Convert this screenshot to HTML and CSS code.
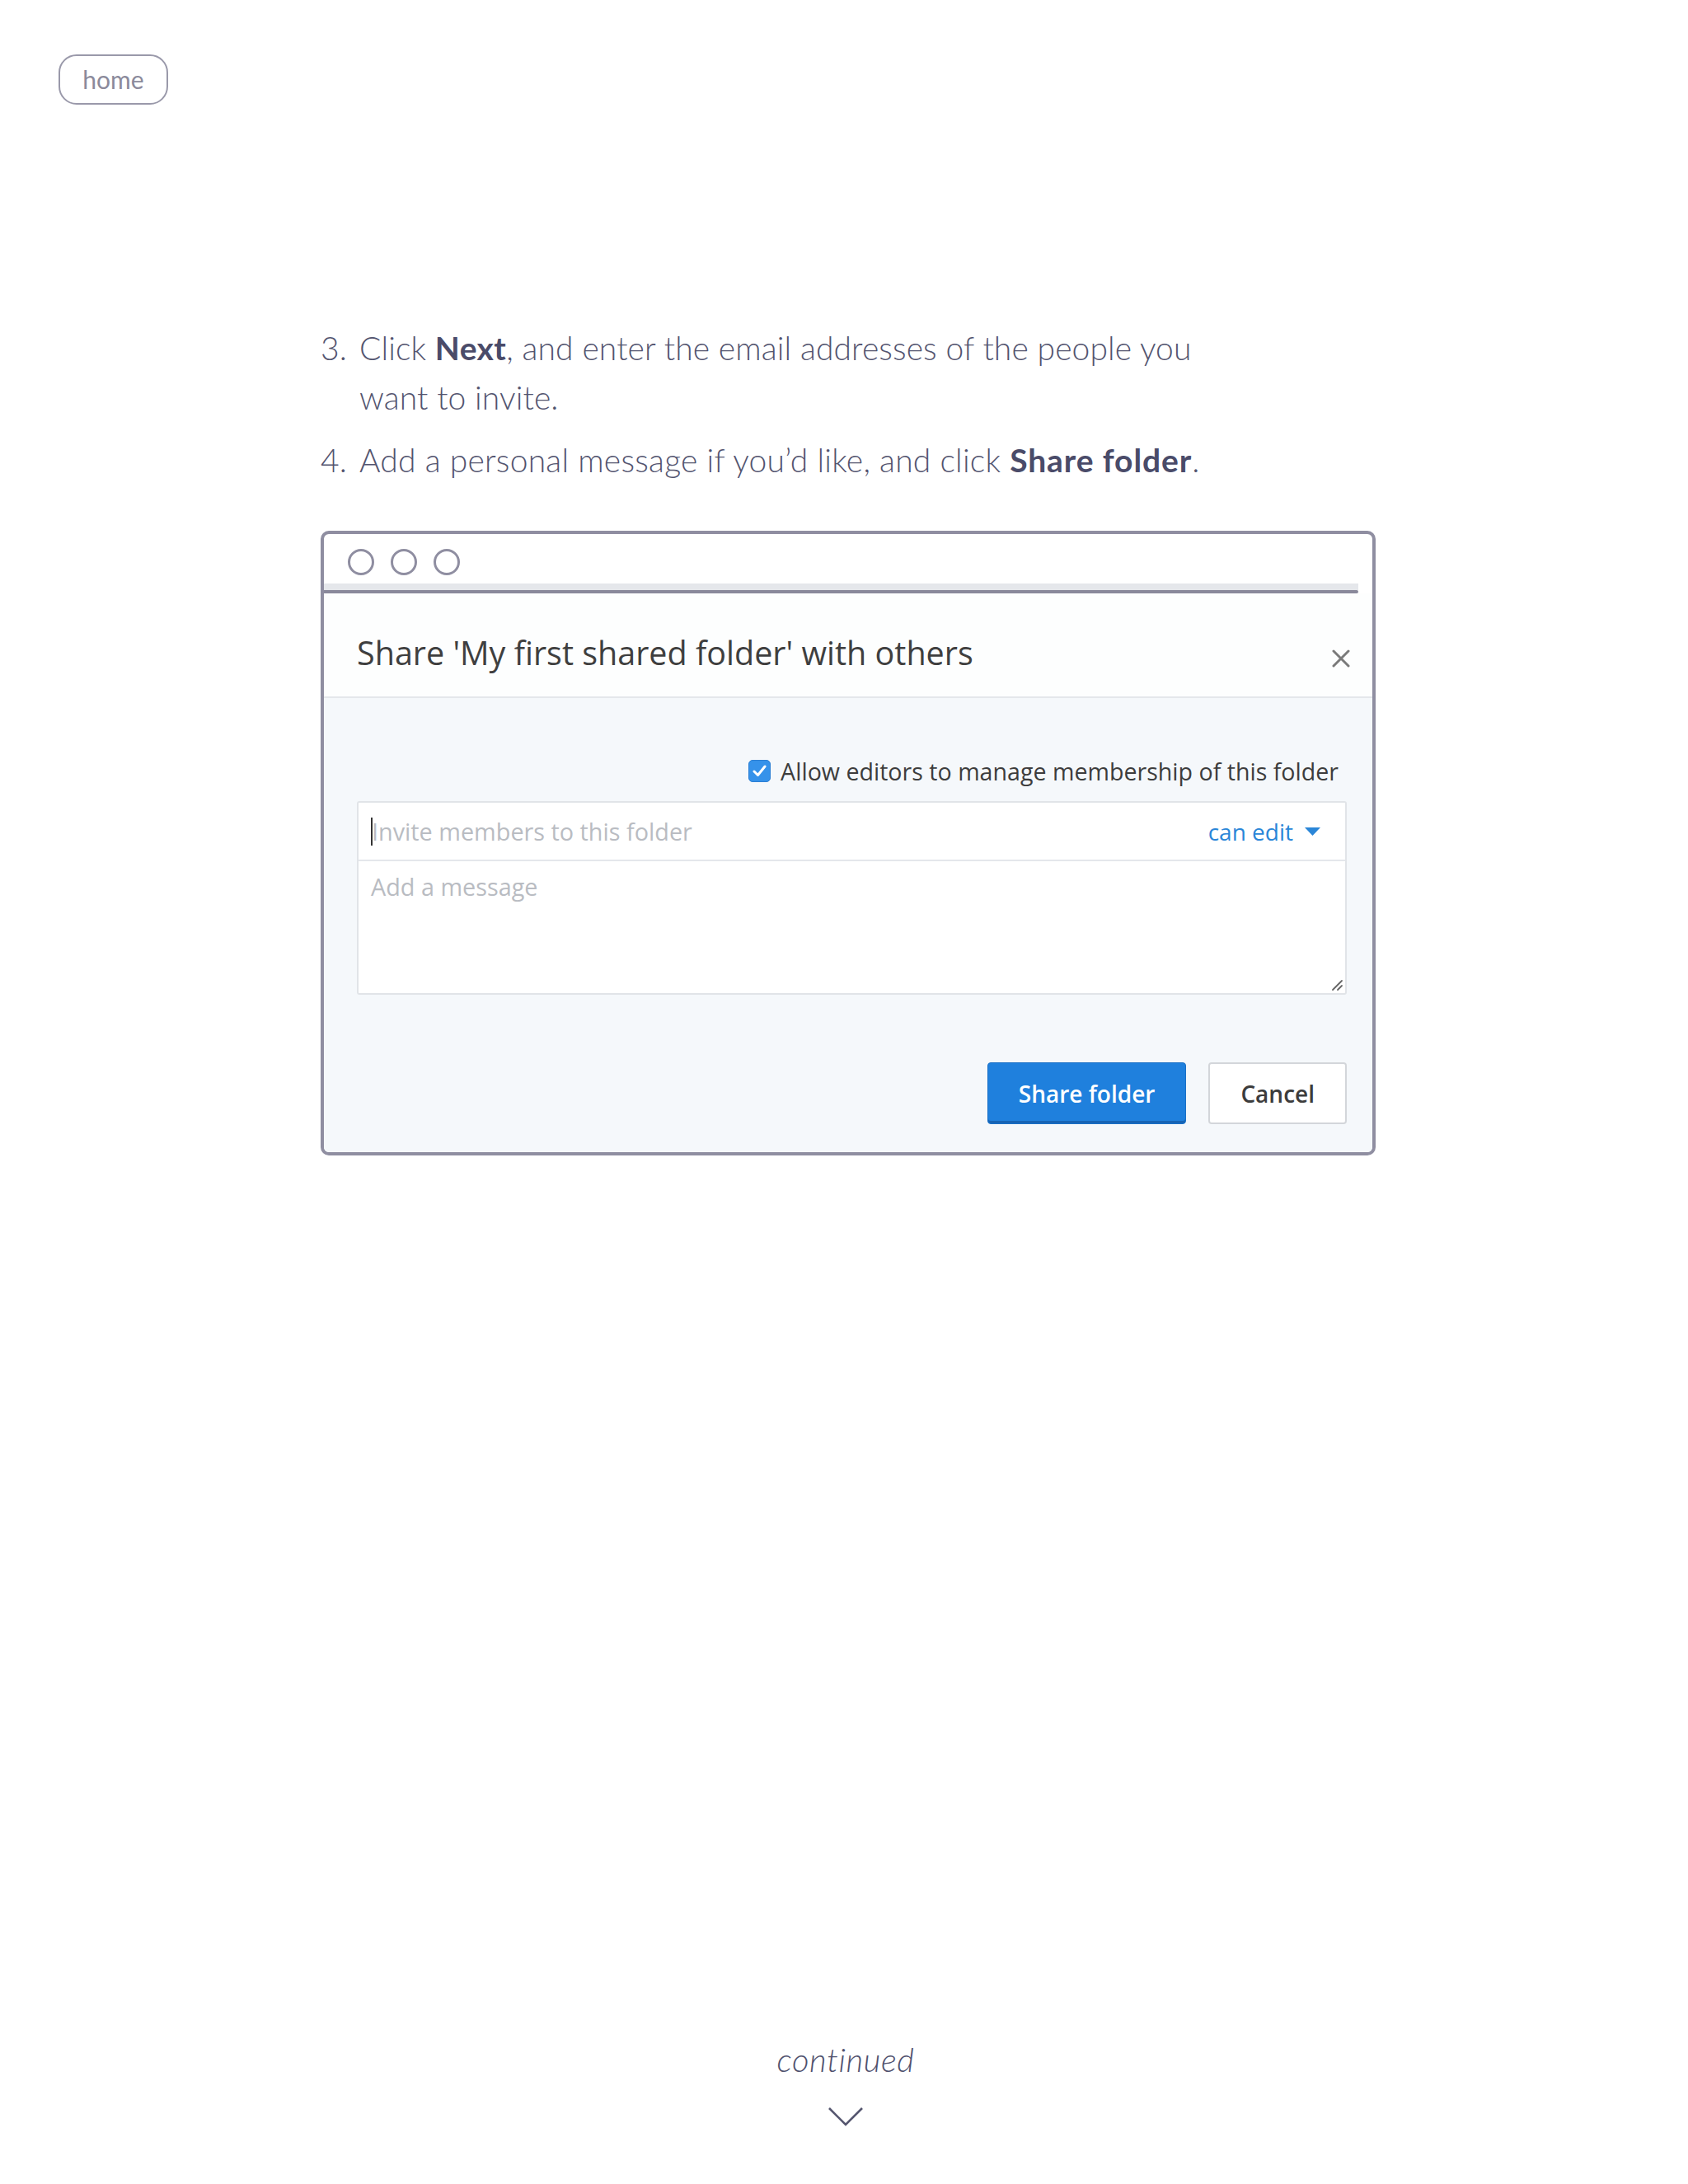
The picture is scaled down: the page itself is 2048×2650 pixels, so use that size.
FILE: index.html
```html
<!DOCTYPE html>
<html lang="en">
<head>
<meta charset="utf-8">
<title>Share a folder</title>
<link rel="stylesheet" href="styles.css">
</head>
<body>
<header class="top">
  <a class="home-btn" href="#">home</a>
</header>
<main class="column">
  <ol class="steps">
    <li class="step"><span class="num">3.</span><span class="txt">Click <b>Next</b>, and enter the email addresses of the people you<br>want to invite.</span></li>
    <li class="step"><span class="num">4.</span><span class="txt">Add a personal message if you’d like, and click <b>Share folder</b>.</span></li>
  </ol>
  <div class="window">
    <div class="titlebar">
      <span class="dot"></span><span class="dot"></span><span class="dot"></span>
    </div>
    <div class="tabline"><div class="band"></div><div class="line"></div></div>
    <div class="dialog">
      <div class="dlg-head">
        <h2 class="dlg-title">Share 'My first shared folder' with others</h2>
        <svg class="close" width="22" height="22" viewBox="0 0 22 22"><path d="M2 2 L20 20 M20 2 L2 20" stroke="#7a7a7a" stroke-width="3" stroke-linecap="round" fill="none"/></svg>
      </div>
      <div class="dlg-body">
        <div class="allow">
          <span class="cb"><svg width="17" height="15" viewBox="0 0 17 15"><path d="M2 8 L6.5 12.5 L15 2" stroke="#fff" stroke-width="3" fill="none" stroke-linecap="round" stroke-linejoin="round"/></svg></span>
          <span class="allow-text">Allow editors to manage membership of this folder</span>
        </div>
        <div class="field">
          <div class="invite-row">
            <span class="caret"></span>
            <span class="ph">Invite members to this folder</span>
            <span class="perm">can edit <svg width="19" height="10" viewBox="0 0 19 10"><path d="M0 0 H19 L9.5 10 Z" fill="#2a86d8"/></svg></span>
          </div>
          <div class="msg">
            <span class="ph">Add a message</span>
            <svg class="grip" width="16" height="16" viewBox="0 0 16 16"><path d="M14 3 L3 14 M14 9 L9 14" stroke="#666" stroke-width="1.8" stroke-linecap="round"/></svg>
          </div>
        </div>
        <div class="actions">
          <button class="btn primary">Share folder</button>
          <button class="btn">Cancel</button>
        </div>
      </div>
    </div>
  </div>
</main>
<footer class="more">
  <span class="more-text">continued</span>
  <svg width="44" height="24" viewBox="0 0 44 24"><path d="M2 2 L22 22 L42 2" stroke="#55566f" stroke-width="2.6" fill="none"/></svg>
</footer>
</body>
</html>
```
FILE: styles.css
```css
body {
  margin: 0;
  background: #ffffff;
  font-family: Lato, "Open Sans", sans-serif;
}

.top {
  padding: 66px 0 0 71px;
}

.home-btn {
  display: inline-flex;
  align-items: center;
  justify-content: center;
  box-sizing: border-box;
  width: 133px;
  height: 61px;
  border: 2.5px solid #9a99aa;
  border-radius: 22px;
  color: #8b8a9b;
  font-size: 30px;
  text-decoration: none;
  padding-bottom: 2px;
}

.column {
  width: 1280px;
  margin: 265px 0 0 calc(50% - 635px);
}

.steps {
  list-style: none;
  margin: 0;
  padding: 0;
  font-size: 39px;
  font-weight: 300;
  line-height: 60px;
  letter-spacing: 0.1px;
  color: #53546f;
}

.step {
  display: flex;
}

.step + .step {
  margin-top: 16px;
}

.num {
  flex: none;
  width: 47px;
}

.txt {
  width: 1045px;
}

.step + .step .txt {
  letter-spacing: 0.25px;
}

.txt b {
  font-weight: 700;
  color: #4a4b69;
  letter-spacing: 0.4px;
}

.step + .step .txt b {
  letter-spacing: 0.9px;
}

/* window */
.window {
  margin-top: 56px;
  box-sizing: border-box;
  width: 1280px;
  border: 4px solid #8f8ea1;
  border-radius: 10px;
  overflow: hidden;
  background: #fff;
}

.titlebar {
  box-sizing: border-box;
  height: 60px;
  padding: 18px 0 0 29px;
  display: flex;
  gap: 20px;
}

.dot {
  box-sizing: border-box;
  width: 32px;
  height: 32px;
  border: 3px solid #8f8ea1;
  border-radius: 50%;
}

.tabline {
  margin-right: 17px;
}

.band {
  height: 8px;
  background: #e5e7eb;
}

.line {
  height: 4px;
  background: #8a899b;
  border-radius: 0 3px 3px 0;
}

.dialog {
  font-family: "Open Sans", sans-serif;
}

.dlg-head {
  box-sizing: border-box;
  height: 127px;
  background: #fdfefe;
  border-bottom: 2px solid #e4e7eb;
  display: flex;
  align-items: flex-start;
  justify-content: space-between;
  padding: 46px 27px 0 40px;
}

.dlg-title {
  margin: 0;
  font-size: 39.5px;
  font-weight: 400;
  line-height: 52px;
  color: #3f3f3f;
}

.close {
  margin-top: 22px;
}

.dlg-body {
  background: #f5f8fb;
  padding: 68px 31px 34px 40px;
}

.allow {
  display: flex;
  align-items: center;
  justify-content: flex-end;
  gap: 12px;
  height: 40px;
  padding-right: 10px;
  font-size: 28.6px;
  color: #3d3d3d;
}

.cb {
  box-sizing: border-box;
  width: 27px;
  height: 27px;
  border-radius: 5px;
  background: #3592ea;
  border: 1px solid #2b7fd4;
  display: flex;
  align-items: center;
  justify-content: center;
}

.field {
  margin-top: 17px;
  border: 2px solid #e1e4e8;
  border-radius: 3px;
  background: #fff;
}

.invite-row {
  box-sizing: border-box;
  height: 71px;
  border-bottom: 2px solid #e4e7eb;
  display: flex;
  align-items: center;
  padding: 0 30px 0 15px;
  font-size: 28px;
}

.caret {
  width: 2px;
  height: 34px;
  background: #333;
  margin-right: -1px;
}

.ph {
  color: #b9bcc2;
  font-size: 28.8px;
  line-height: 36px;
}

.perm {
  margin-left: auto;
  display: flex;
  align-items: center;
  gap: 14px;
  color: #2a86d8;
}

.msg {
  position: relative;
  box-sizing: border-box;
  height: 160px;
  padding: 13px 0 0 15px;
}

.grip {
  position: absolute;
  right: 2px;
  bottom: 2px;
}

.actions {
  margin-top: 82px;
  display: flex;
  justify-content: flex-end;
  gap: 27px;
}

.btn {
  box-sizing: border-box;
  height: 75px;
  padding: 0 37px;
  font-family: "Open Sans", sans-serif;
  font-size: 28px;
  font-weight: 600;
  border-radius: 4px;
  border: 2px solid #d3d6da;
  background: #fff;
  color: #3c3c3c;
}

.btn.primary {
  background: #1f80dd;
  border: 1px solid #1a70c6;
  box-shadow: inset 0 -3px 0 #1764b4;
  color: #fff;
  padding: 0 37px;
}

.more {
  margin-top: 1075px;
  display: flex;
  flex-direction: column;
  align-items: center;
  gap: 35px;
  padding-left: 4px;
}

.more-text {
  font-size: 40px;
  font-style: italic;
  font-weight: 300;
  line-height: 44px;
  letter-spacing: 0.6px;
  color: #50516e;
}
```
